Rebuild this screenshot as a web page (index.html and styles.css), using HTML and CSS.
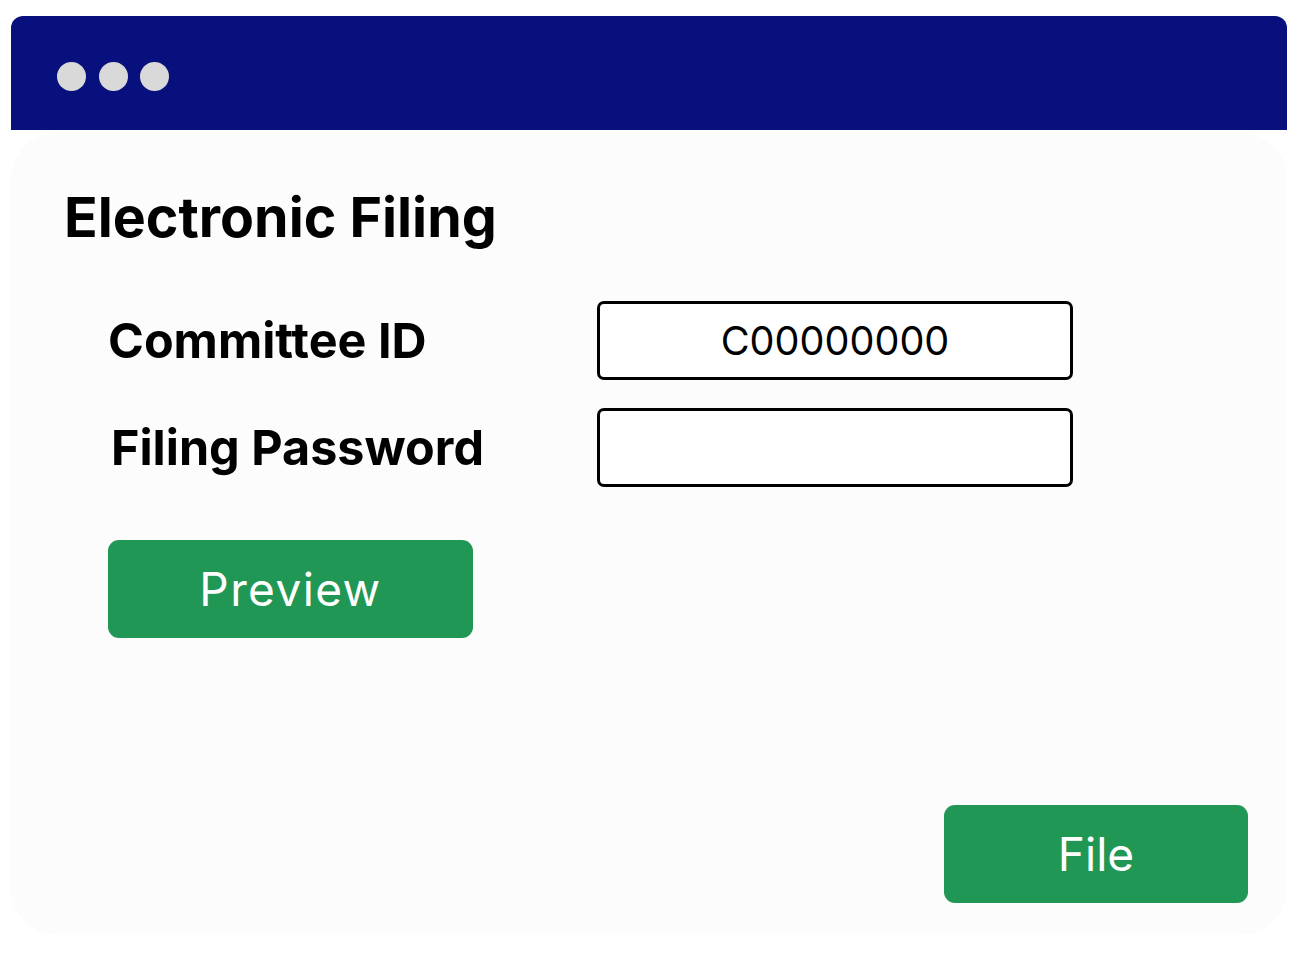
FILE: index.html
```html
<!DOCTYPE html>
<html lang="en">
<head>
<meta charset="utf-8">
<title>Electronic Filing</title>
<link rel="stylesheet" href="styles.css">
</head>
<body>
<div class="window">
  <div class="titlebar">
    <span class="dot"></span>
    <span class="dot"></span>
    <span class="dot"></span>
  </div>
  <div class="panel">
    <h1 class="title">Electronic Filing</h1>
    <div class="form">
      <label class="label">Committee ID</label>
      <div class="field">C00000000</div>
      <label class="label label-pw">Filing Password</label>
      <div class="field"></div>
    </div>
    <button class="btn btn-preview">Preview</button>
    <button class="btn btn-file">File</button>
  </div>
</div>
</body>
</html>
```

FILE: styles.css
```css
html, body {
  margin: 0;
  padding: 0;
  background: #ffffff;
}
body {
  width: 1300px;
  height: 957px;
  overflow: hidden;
  font-family: Inter, "Noto Sans", "Liberation Sans", sans-serif;
  color: #000;
}
.window {
  margin: 16px 0 0 11px;
  width: 1276px;
}
.titlebar {
  height: 114px;
  box-sizing: border-box;
  padding: 6px 0 0 46px;
  background: #08107e;
  border-radius: 12px 12px 0 0;
  display: flex;
  align-items: center;
  gap: 12.5px;
}
.dot {
  width: 29px;
  height: 29px;
  border-radius: 50%;
  background: #d9d9d9;
}
.panel {
  margin-top: 3px;
  height: 802px;
  box-sizing: border-box;
  padding: 52px 39px 32px 53px;
  background: #fcfcfc;
  border-radius: 46px;
  display: flex;
  flex-direction: column;
  align-items: flex-start;
}
.title {
  margin: 0;
  font-size: 55.5px;
  line-height: 64px;
  font-weight: 700;
}
.form {
  margin-top: 52px;
  padding-left: 44px;
  display: grid;
  grid-template-columns: 489px 476px;
  grid-auto-rows: 79px;
  row-gap: 28px;
  align-items: center;
}
.label {
  font-size: 48.5px;
  font-weight: 700;
  line-height: 56px;
}
.label-pw {
  padding-left: 3px;
}
.field {
  height: 79px;
  box-sizing: border-box;
  border: 3px solid #000;
  border-radius: 7px;
  background: #fff;
  display: flex;
  align-items: center;
  justify-content: center;
  font-size: 39.6px;
  font-weight: 400;
}
.btn {
  border: 0;
  margin: 0;
  padding: 0;
  background: #219755;
  color: #fff;
  font-family: inherit;
  font-size: 46px;
  font-weight: 400;
  border-radius: 11px;
  height: 98px;
  display: flex;
  align-items: center;
  justify-content: center;
}
.btn-preview {
  margin: 53px 0 0 44px;
  width: 365px;
  letter-spacing: 1.4px;
}
.btn-file {
  margin-top: auto;
  align-self: flex-end;
  width: 304px;
}
```
